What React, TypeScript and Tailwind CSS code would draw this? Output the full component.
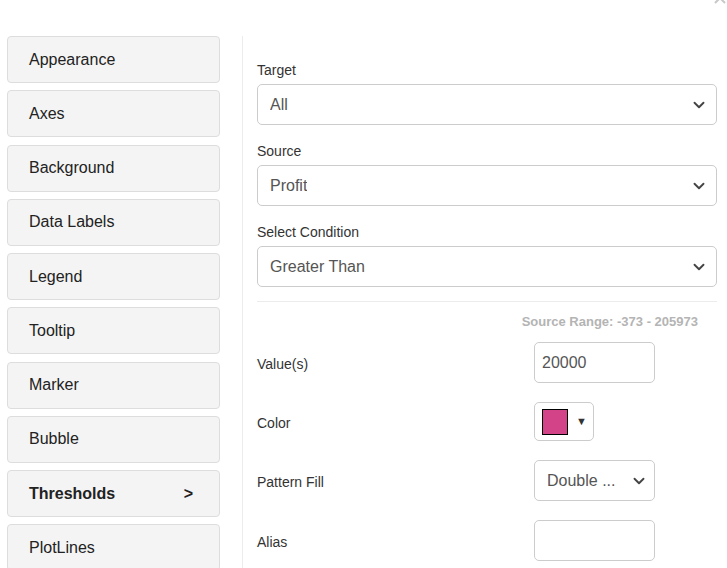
import { ChevronDown } from 'lucide-react'

const navItems = [
  'Appearance',
  'Axes',
  'Background',
  'Data Labels',
  'Legend',
  'Tooltip',
  'Marker',
  'Bubble',
  'Thresholds',
  'PlotLines',
]

function SelectBox({ value, className = '' }: { value: string; className?: string }) {
  return (
    <div
      className={`flex h-[41px] items-center justify-between rounded-[5px] border border-[#cccccc] bg-white pl-[12px] pr-[8px] text-[16px] text-[#555555] ${className}`}
    >
      <span className="truncate">{value}</span>
      <ChevronDown size={18} strokeWidth={2.5} className="shrink-0 text-[#444444]" />
    </div>
  )
}

function Field({ label, value }: { label: string; value: string }) {
  return (
    <div className="flex flex-col">
      <label className="mb-[4px] text-[14px] leading-[20px] text-[#333333]">{label}</label>
      <SelectBox value={value} />
    </div>
  )
}

function Row({ label, children }: { label: string; children: React.ReactNode }) {
  return (
    <div className="flex items-center">
      <div className="w-[277px] pt-[4px] text-[14px] text-[#333333]">{label}</div>
      {children}
    </div>
  )
}

export default function App() {
  return (
    <div
      className="relative h-[568px] w-[727px] overflow-hidden bg-white"
      style={{ fontFamily: '"Liberation Sans", Arial, sans-serif' }}
    >
      {/* close button, mostly scrolled out of view */}
      <svg className="absolute right-[1px] top-[-8px]" width="12" height="12" viewBox="0 0 12 12">
        <path d="M1 1 L11 11 M11 1 L1 11" stroke="#c8c8c8" strokeWidth="2" />
      </svg>

      <div className="flex pt-[36px]">
        <div className="flex w-[220px] shrink-0 flex-col gap-[7.25px] pl-[7px]">
          {navItems.map((item) => {
            const active = item === 'Thresholds'
            return (
              <div
                key={item}
                className={`flex h-[47px] items-center justify-between rounded-[4px] border border-[#dddddd] bg-[#f4f4f4] pl-[21px] pr-[26px] text-[16px] text-[#222222] ${
                  active ? 'font-bold' : ''
                }`}
              >
                <span>{item}</span>
                {active && <span className="font-bold">&gt;</span>}
              </div>
            )
          })}
        </div>

        <div className="ml-[22px] w-px self-stretch bg-[#ececec]" />

        <div className="flex flex-1 flex-col pl-[14px] pr-[10px] pt-[24px]">
          <div className="flex flex-col gap-[16px]">
            <Field label="Target" value="All" />
            <Field label="Source" value="Profit" />
            <Field label="Select Condition" value="Greater Than" />
          </div>

          <div className="mt-[14px] h-px bg-[#ececec]" />

          <div className="mt-[12px] pr-[19px] text-right text-[13px] font-bold leading-[15px] text-[#b4b4b4]">
            Source Range: -373 - 205973
          </div>

          <div className="mt-[13px] flex flex-col gap-[19px]">
            <Row label="Value(s)">
              <div className="flex h-[41px] w-[121px] items-center rounded-[5px] border border-[#cccccc] px-[7px] text-[16px] text-[#555555]">
                20000
              </div>
            </Row>
            <Row label="Color">
              <div className="flex h-[39px] w-[60px] items-center gap-[8px] rounded-[5px] border border-[#cccccc] pl-[7px]">
                <div className="h-[26px] w-[26px] border border-black bg-[#d24487]" />
                <span className="text-[11px] text-[#333333]">▼</span>
              </div>
            </Row>
            <Row label="Pattern Fill">
              <SelectBox value="Double ..." className="w-[121px] !pr-[6px]" />
            </Row>
            <Row label="Alias">
              <div className="h-[41px] w-[121px] rounded-[5px] border border-[#cccccc]" />
            </Row>
          </div>
        </div>
      </div>
    </div>
  )
}
